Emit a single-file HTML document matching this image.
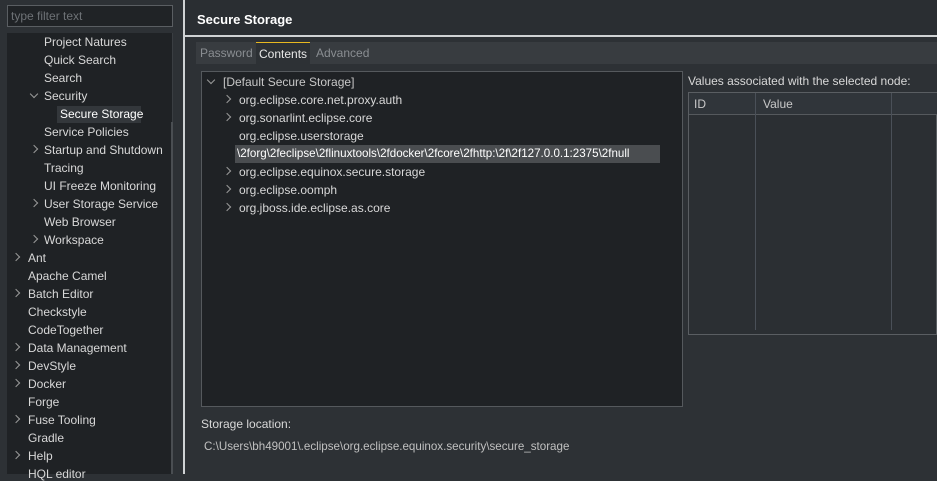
<!DOCTYPE html><html><head><style>
*{margin:0;padding:0;box-sizing:border-box}
body{width:937px;height:474px;overflow:hidden;background:#2d3135;font-family:"Liberation Sans",sans-serif;font-size:12px;color:#d4d4d4;position:relative}
.a{position:absolute;white-space:nowrap}
.filter{left:7px;top:5px;width:166px;height:22px;border:1px solid #5a5e62;background:#202326;color:#6e7276;padding:3px 3px;font-size:12px}
.lt{left:7px;top:33px;width:166px;height:441px;background:#1f2225;border-right:1px solid #3a3e42}
.sb{left:171px;top:122px;width:2px;height:352px;background:#4a4e52}
.r{position:absolute;white-space:nowrap;font-size:12px;color:#d8d8d8}
.ar{position:absolute;width:6px;height:6px;border-right:1.5px solid #9a9a9a;border-bottom:1.5px solid #9a9a9a}
.rt{transform:rotate(-45deg)}
.dn{transform:rotate(45deg)}
.vd{left:183px;top:0;width:2px;height:474px;background:#cfd2d4}
.hd{left:185px;top:35px;width:752px;height:2px;background:#cfd2d4}
.tree{left:201px;top:71px;width:482px;height:336px;background:#1f2225;border:1px solid #55595d}
.tab{position:absolute;top:42px;height:22px;padding:4px 3px;font-size:12px;color:#8a8e92;background:#383c40}
</style></head><body>
<div class="a filter">type filter text</div>
<div class="a lt"></div>
<div class="a sb"></div>
<div class="r" style="left:44px;top:35px">Project Natures</div>
<div class="r" style="left:44px;top:53px">Quick Search</div>
<div class="r" style="left:44px;top:71px">Search</div>
<div class="ar dn" style="left:31px;top:91px"></div>
<div class="r" style="left:44px;top:89px">Security</div>
<div class="a" style="left:57px;top:106px;width:84px;height:17px;background:#33373b"></div>
<div class="r" style="left:60px;top:107px;color:#fff">Secure Storage</div>
<div class="r" style="left:44px;top:125px">Service Policies</div>
<div class="ar rt" style="left:31px;top:146px"></div><div class="r" style="left:44px;top:143px">Startup and Shutdown</div>
<div class="r" style="left:44px;top:161px">Tracing</div>
<div class="r" style="left:44px;top:179px">UI Freeze Monitoring</div>
<div class="ar rt" style="left:31px;top:200px"></div><div class="r" style="left:44px;top:197px">User Storage Service</div>
<div class="r" style="left:44px;top:215px">Web Browser</div>
<div class="ar rt" style="left:31px;top:236px"></div><div class="r" style="left:44px;top:233px">Workspace</div>
<div class="ar rt" style="left:13px;top:254px"></div><div class="r" style="left:28px;top:251px">Ant</div>
<div class="r" style="left:28px;top:269px">Apache Camel</div>
<div class="ar rt" style="left:13px;top:290px"></div><div class="r" style="left:28px;top:287px">Batch Editor</div>
<div class="r" style="left:28px;top:305px">Checkstyle</div>
<div class="r" style="left:28px;top:323px">CodeTogether</div>
<div class="ar rt" style="left:13px;top:344px"></div><div class="r" style="left:28px;top:341px">Data Management</div>
<div class="ar rt" style="left:13px;top:362px"></div><div class="r" style="left:28px;top:359px">DevStyle</div>
<div class="ar rt" style="left:13px;top:380px"></div><div class="r" style="left:28px;top:377px">Docker</div>
<div class="r" style="left:28px;top:395px">Forge</div>
<div class="ar rt" style="left:13px;top:416px"></div><div class="r" style="left:28px;top:413px">Fuse Tooling</div>
<div class="r" style="left:28px;top:431px">Gradle</div>
<div class="ar rt" style="left:13px;top:452px"></div><div class="r" style="left:28px;top:449px">Help</div>
<div class="r" style="left:28px;top:467px">HQL editor</div>
<div class="a vd"></div>
<div class="a" style="left:185px;top:0;width:752px;height:35px;background:#2a2e32"></div>
<div class="r" style="left:197px;top:12px;font-weight:bold;font-size:13px;color:#fff">Secure Storage</div>
<div class="a hd"></div>
<div class="a" style="left:196px;top:42px;width:741px;height:22px;background:#383c40"></div>
<div class="tab" style="left:197px">Password</div>
<div class="tab" style="left:256px;background:#2d3135;color:#e8e8e8;border-top:1px solid #e8b820">Contents</div>
<div class="tab" style="left:313px">Advanced</div>
<div class="a tree"></div>
<div class="ar dn" style="left:208px;top:77px"></div>
<div class="r" style="left:223px;top:75px;color:#c8c8c8">[Default Secure Storage]</div>
<div class="ar rt" style="left:224px;top:96px"></div><div class="r" style="left:239px;top:93px">org.eclipse.core.net.proxy.auth</div>
<div class="ar rt" style="left:224px;top:114px"></div><div class="r" style="left:239px;top:111px">org.sonarlint.eclipse.core</div>
<div class="r" style="left:239px;top:129px">org.eclipse.userstorage</div>
<div class="a" style="left:235px;top:145px;width:425px;height:18px;background:#4a4d50"></div>
<div class="r" style="left:237px;top:147px;color:#fff;font-size:11.6px">\2forg\2feclipse\2flinuxtools\2fdocker\2fcore\2fhttp:\2f\2f127.0.0.1:2375\2fnull</div>
<div class="ar rt" style="left:224px;top:168px"></div><div class="r" style="left:239px;top:165px">org.eclipse.equinox.secure.storage</div>
<div class="ar rt" style="left:224px;top:186px"></div><div class="r" style="left:239px;top:183px">org.eclipse.oomph</div>
<div class="ar rt" style="left:224px;top:204px"></div><div class="r" style="left:239px;top:201px">org.jboss.ide.eclipse.as.core</div>
<div class="r" style="left:688px;top:74px">Values associated with the selected node:</div>
<div class="a" style="left:688px;top:92px;width:249px;height:243px;border:1px solid #5a5e62;background:#2b2f33"></div>
<div class="a" style="left:689px;top:93px;width:248px;height:22px;background:#30353a;border-bottom:1px solid #55595d"></div>
<div class="a" style="left:755px;top:93px;width:1px;height:237px;background:#4a5058"></div>
<div class="a" style="left:891px;top:93px;width:1px;height:237px;background:#4a5058"></div>
<div class="r" style="left:694px;top:97px;color:#c8c8c8">ID</div>
<div class="r" style="left:763px;top:97px;color:#c8c8c8">Value</div>
<div class="r" style="left:201px;top:417px">Storage location:</div>
<div class="r" style="left:204px;top:440px;color:#c0c0c0;font-size:11.6px">C:\Users\bh49001\.eclipse\org.eclipse.equinox.security\secure_storage</div>
</body></html>
